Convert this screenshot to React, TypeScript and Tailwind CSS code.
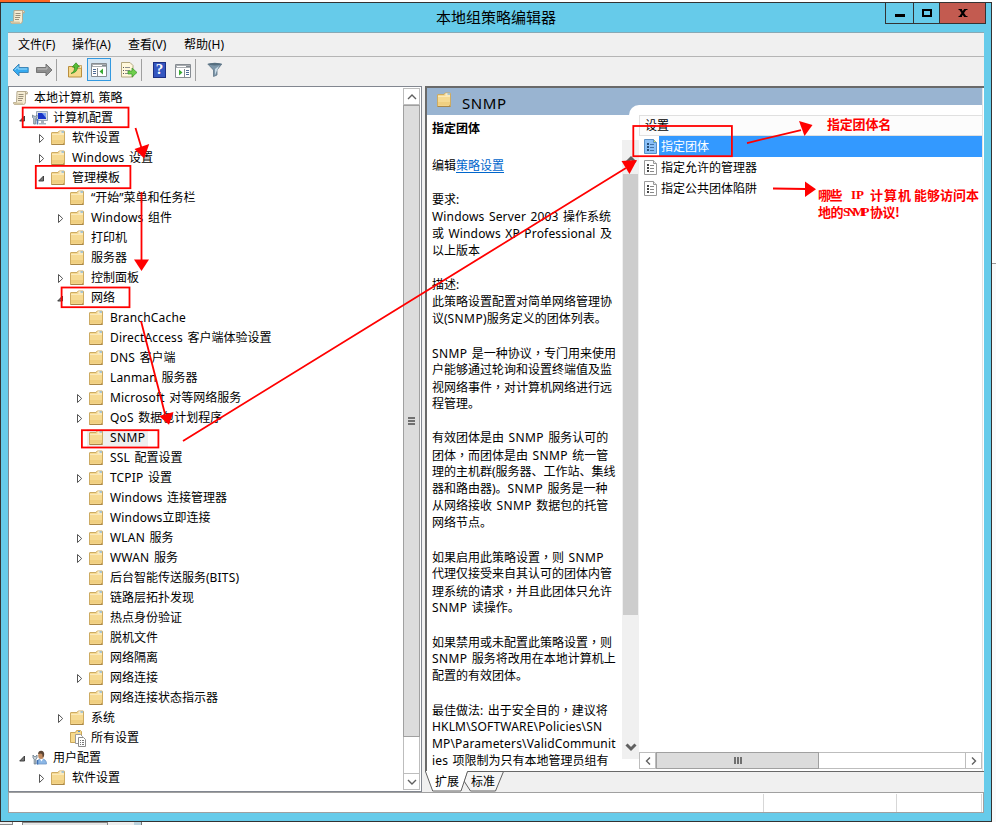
import React from 'react';

type IconKind = 'folder' | 'scroll' | 'computer' | 'user' | 'all';
type Item = { d: number; t: string; k?: IconKind; a?: 'open' | 'closed'; sel?: boolean };

const ITEMS: Item[] = [
  { d: 0, t: '本地计算机 策略', k: 'scroll' },
  { d: 1, t: '计算机配置', k: 'computer', a: 'open' },
  { d: 2, t: '软件设置', a: 'closed' },
  { d: 2, t: 'Windows 设置', a: 'closed' },
  { d: 2, t: '管理模板', a: 'open' },
  { d: 3, t: '“开始”菜单和任务栏' },
  { d: 3, t: 'Windows 组件', a: 'closed' },
  { d: 3, t: '打印机' },
  { d: 3, t: '服务器' },
  { d: 3, t: '控制面板', a: 'closed' },
  { d: 3, t: '网络', a: 'open' },
  { d: 4, t: 'BranchCache' },
  { d: 4, t: 'DirectAccess 客户端体验设置' },
  { d: 4, t: 'DNS 客户端' },
  { d: 4, t: 'Lanman 服务器' },
  { d: 4, t: 'Microsoft 对等网络服务', a: 'closed' },
  { d: 4, t: 'QoS 数据包计划程序', a: 'closed' },
  { d: 4, t: 'SNMP', sel: true },
  { d: 4, t: 'SSL 配置设置' },
  { d: 4, t: 'TCPIP 设置', a: 'closed' },
  { d: 4, t: 'Windows 连接管理器' },
  { d: 4, t: 'Windows立即连接' },
  { d: 4, t: 'WLAN 服务', a: 'closed' },
  { d: 4, t: 'WWAN 服务', a: 'closed' },
  { d: 4, t: '后台智能传送服务(BITS)' },
  { d: 4, t: '链路层拓扑发现' },
  { d: 4, t: '热点身份验证' },
  { d: 4, t: '脱机文件' },
  { d: 4, t: '网络隔离' },
  { d: 4, t: '网络连接', a: 'closed' },
  { d: 4, t: '网络连接状态指示器' },
  { d: 3, t: '系统', a: 'closed' },
  { d: 3, t: '所有设置', k: 'all' },
  { d: 1, t: '用户配置', k: 'user', a: 'open' },
  { d: 2, t: '软件设置', a: 'closed' },
];

const INDENT = ['pl-[4px]', 'pl-[10px]', 'pl-[29px]', 'pl-[48px]', 'pl-[67px]'];

const DESC = [
  '要求:',
  'Windows Server 2003 操作系统',
  '或 Windows XP Professional 及',
  '以上版本',
  '',
  '描述:',
  '此策略设置配置对简单网络管理协',
  '议(SNMP)服务定义的团体列表。',
  '',
  'SNMP 是一种协议，专门用来使用',
  '户能够通过轮询和设置终端值及监',
  '视网络事件，对计算机网络进行远',
  '程管理。',
  '',
  '有效团体是由 SNMP 服务认可的',
  '团体，而团体是由 SNMP 统一管',
  '理的主机群(服务器、工作站、集线',
  '器和路由器)。SNMP 服务是一种',
  '从网络接收 SNMP 数据包的托管',
  '网络节点。',
  '',
  '如果启用此策略设置，则 SNMP',
  '代理仅接受来自其认可的团体内管',
  '理系统的请求，并且此团体只允许',
  'SNMP 读操作。',
  '',
  '如果禁用或未配置此策略设置，则',
  'SNMP 服务将改用在本地计算机上',
  '配置的有效团体。',
  '',
  '最佳做法: 出于安全目的，建议将',
  'HKLM\\SOFTWARE\\Policies\\SN',
  'MP\\Parameters\\ValidCommunit',
  'ies 项限制为只有本地管理员组有',
];

/* Latin runs are set slightly wider; commas use the form centred in its cell. */
function Mixed({ t }: { t: string }) {
  return (
    <>
      {t.split(/([A-Za-z0-9\\]+|，)/).map((p, i) =>
        p === '，' ? (
          <span key={i} lang="zh-TW" className="font-['Noto_Sans_CJK_TC',sans-serif]">{p}</span>
        ) : p === 'SNMP' ? (
          <span key={i} className="tracking-[0.4px]">{p}</span>
        ) : i % 2 ? (
          <span key={i} className="tracking-[0.17px]">{p}</span>
        ) : (
          p
        ),
      )}
    </>
  );
}

function Folder() {
  return (
    <svg width="16" height="16" viewBox="0 0 16 16" className="shrink-0">
      <path d="M.5 3q0-.5.5-.5h6l1.200-1.500H13q.5 0 .5.5v12.500q0 .5-.5.5H1q-.5 0-.5-.5z" fill="#f6da93" stroke="#cdab62" />
      <path d="M1 4h7l1-1h4v2H1z" fill="#fbe9b9" />
      <path d="M1 10h12v3.500H1z" fill="#f0cf80" />
      <path d="M8.500 2H13" stroke="#fff" />
      <path d="M10.500 2H13" stroke="#5da2dc" />
      <path d="M.5 14.500h13" stroke="#a98748" />
      <path d="M12 14l1-1.500V14z" fill="#b08c48" />
    </svg>
  );
}

function Scroll() {
  return (
    <svg width="16" height="16" viewBox="0 0 16 16" className="shrink-0">
      <path d="M4 1.500h9.500q1 0 1 2h-2v8q0 3-2 3H2q-1.500 0-1.500-2h3z" fill="#f5ecd2" stroke="#b5aa90" />
      <path d="M1 12.500h8.500l1 2H2z" fill="#d5c7a3" />
      <path d="M5.500 4.500h5M5.500 6.500h5M5 8.500h5M5 10.500h4" stroke="#9a917c" />
      <path d="M12.500 2v2h2" fill="none" stroke="#bdb095" />
    </svg>
  );
}

function Computer() {
  return (
    <svg width="16" height="16" viewBox="0 0 16 16" className="shrink-0">
      <path d="M4.500 1.500h11v9h-11z" fill="#d7dee4" stroke="#9ba9b5" />
      <path d="M6 3h8v6H6z" fill="#1735c8" />
      <path d="M10 3h4v5z" fill="#7ca2f0" />
      <path d="M9 11h3v2h2v1.500H7V13h2z" fill="#a5b1bc" />
      <path d="M.5 5v2.500l1.200 1V14h2V8.500L5 7.500V5L3.800 6.200H2z" fill="#b6c4cf" stroke="#6c7d8c" strokeWidth=".8" />
      <path d="M5.500 9v5.500" stroke="#5079b5" strokeWidth="1.600" />
    </svg>
  );
}

function User() {
  return (
    <svg width="16" height="16" viewBox="0 0 16 16" className="shrink-0">
      <path d="M5 14q-.5-5 4.500-5t5 5z" fill="#8bb7e6" stroke="#6c94c4" strokeWidth=".8" />
      <path d="M8 9l1.500 2.500L11 9z" fill="#fff" />
      <ellipse cx="9" cy="5.500" rx="2.800" ry="3.600" fill="#c18a5f" />
      <path d="M6 4q.5-3.500 3.500-3.200Q13 1.500 12 6q-1 2-1.500.5Q11 4 9 3.500z" fill="#5d4635" />
      <path d="M1 5v3l1.200 1V14h1.600V9L5 8V5L3.800 6.500H2.200z" fill="#cbd5dd" stroke="#657787" strokeWidth=".8" />
      <path d="M5.500 10v4.500" stroke="#3f70b5" strokeWidth="1.500" />
    </svg>
  );
}

function AllSettings() {
  return (
    <svg width="17" height="17" viewBox="0 0 17 17" className="shrink-0">
      <path d="M.5 2.500h5l1-2h4l1 1v11H.5z" fill="#f6d98c" stroke="#c9a65a" />
      <path d="M8 1.500h2" stroke="#4a90d9" />
      <path d="M5.500 4.500h5l2 2v7h-7z" fill="#fff" stroke="#9b9b9b" />
      <path d="M8.500 7.500h5l2 2v7h-7z" fill="#fff" stroke="#8b8b8b" />
      <path d="M10 10.500h1M12 10.500h2M10 12.500h1M12 12.500h2M10 14.500h1M12 14.500h2" stroke="#777" />
    </svg>
  );
}

function ItemIcon({ k }: { k?: IconKind }) {
  if (k === 'scroll') return <Scroll />;
  if (k === 'computer') return <Computer />;
  if (k === 'user') return <User />;
  if (k === 'all') return <AllSettings />;
  return <Folder />;
}

function Expander({ a }: { a?: 'open' | 'closed' }) {
  return (
    <svg width="12" height="12" viewBox="0 0 12 12" className="shrink-0">
      {a === 'closed' && <path d="M1.500 2.500v8l4.200-4z" fill="#fff" stroke="#555" />}
      {a === 'open' && <path d="M5.500 4v5H.7z" fill="#777" stroke="#333" strokeWidth=".9" />}
    </svg>
  );
}

function TreeRow({ item }: { item: Item }) {
  return (
    <div className={`flex h-[20px] items-center ${INDENT[item.d]}`}>
      {item.d > 0 && (
        <span className="flex w-[13px] shrink-0">
          <Expander a={item.a} />
        </span>
      )}
      <span className={item.sel ? '-ml-[2px] flex h-[19px] items-center bg-[#efefef] pl-[2px]' : 'flex h-[19px] items-center'}>
        <span className="flex w-[18px] shrink-0">
          <ItemIcon k={item.k} />
        </span>
        <span className="whitespace-pre px-[3px] leading-[18px] [word-spacing:1.5px]"><Mixed t={item.t} /></span>
      </span>
    </div>
  );
}

function Chevron({ dir, heavy }: { dir: 'up' | 'down' | 'left' | 'right'; heavy?: boolean }) {
  const paths = {
    up: 'M2 8l4-4 4 4',
    down: 'M2 4l4 4 4-4',
    left: 'M8 2.500L4.500 6 8 9.500',
    right: 'M4 2.500L7.500 6 4 9.500',
  };
  return (
    <svg width="12" height="12" viewBox="0 0 12 12">
      <path d={heavy ? (dir === 'up' ? 'M1.500 8.500L6 4l4.500 4.500' : 'M1.500 3.500L6 8l4.500-4.500') : paths[dir]} fill="none" stroke="#606060" strokeWidth={heavy ? 3 : 1.4} />
    </svg>
  );
}

function Sep() {
  return <span className="h-[22px] w-px shrink-0 bg-[#a0a0a0]" />;
}

function Toolbar() {
  return (
    <div className="flex h-[29px] items-center pb-[4px] pl-[4px]">
      <svg width="18" height="16" viewBox="0 0 18 16" className="shrink-0">
        <path d="M1 8l6-6v3.500h9.200v5H7V14z" fill="#35aaf0" stroke="#3f87b8" />
        <path d="M2.800 8L6 4.500V7h9.200" fill="none" stroke="#a6dcf7" />
      </svg>
      <svg width="18" height="16" viewBox="0 0 18 16" className="ml-[5px] shrink-0">
        <path d="M17 8l-6-6v3.500H1.500v5H11V14z" fill="#8d8d8d" stroke="#757575" />
        <path d="M2.500 7H12V4.500" fill="none" stroke="#bdbdbd" />
      </svg>
      <span className="ml-[3px] flex"><Sep /></span>
      <svg width="16" height="16" viewBox="0 0 16 16" className="ml-[11px] shrink-0">
        <path d="M.5 4.500h4l1 1h8v9.500H.5z" fill="#f6d98c" stroke="#b98e3e" />
        <path d="M9 3.500h4.500v3H9z" fill="#f7e3ac" stroke="#b98e3e" strokeWidth=".7" />
        <path d="M3 11.500q4-2 3.500-6.500H4.200L8 .8 11.500 5H9.500q0 5.500-6.500 6.500z" fill="#58bd35" stroke="#2b8a20" strokeWidth=".7" />
      </svg>
      <span className="ml-[3px] flex h-[23px] w-[24px] shrink-0 items-center justify-center border border-[#3399e0] bg-[#d5e6f3]">
        <svg width="16" height="14" viewBox="0 0 16 14">
          <path d="M.5.5h15v13H.5z" fill="#fff" stroke="#868c92" />
          <path d="M1 1h14v3H1z" fill="#a9adb1" />
          <path d="M2 2.500h9" stroke="#fff" />
          <path d="M11.500 2.500h1M13.500 2.500h1" stroke="#5b6670" />
          <path d="M6.500 5v8" stroke="#868c92" />
          <path d="M2 6.500h3M2 8.500h3M2 10.500h3" stroke="#4e6b96" />
          <path d="M12 5.500v6L8.500 8.500z" fill="#3aaa35" />
        </svg>
      </span>
      <svg width="17" height="16" viewBox="0 0 17 16" className="ml-[10px] shrink-0">
        <path d="M.5.500h8.500l3 3v11.500H.5z" fill="#fff8dc" stroke="#b2a77e" />
        <path d="M4 5.500h5M4 8.500h5M4 11.500h5" stroke="#8f8f8f" />
        <path d="M2 5.500h1M2 8.500h1M2 11.500h1" stroke="#555" />
        <path d="M7 9h4V6l5 4.500-5 4.500v-3H7z" fill="#6fcf4c" stroke="#37932a" strokeWidth=".7" />
      </svg>
      <span className="ml-[3px] flex"><Sep /></span>
      <span className="ml-[11px] flex h-[16px] w-[13px] shrink-0 items-center justify-center border border-[#1c2f83] bg-[#3557c0] font-['Liberation_Serif',serif] text-[15px] font-bold leading-[15px] text-white">?</span>
      <svg width="16" height="14" viewBox="0 0 16 14" className="ml-[9px] mt-[2px] shrink-0">
        <path d="M.5.5h15v13H.5z" fill="#fff" stroke="#868c92" />
        <path d="M1 1h14v3H1z" fill="#a9adb1" />
        <path d="M2 2.500h9" stroke="#fff" />
        <path d="M11.500 2.500h1M13.500 2.500h1" stroke="#5b6670" />
        <path d="M9.500 5v8" stroke="#868c92" />
        <path d="M11 6.500h3M11 8.500h3M11 10.500h3" stroke="#4e6b96" />
        <path d="M4 5.500v6l3.500-3z" fill="#3aaa35" />
      </svg>
      <span className="ml-[4px] flex"><Sep /></span>
      <svg width="16" height="16" viewBox="0 0 16 16" className="ml-[11px] shrink-0">
        <path d="M.8 2h14L10 8v5l-3.500 1.500V8z" fill="#7d97aa" stroke="#5d7485" strokeWidth=".8" />
        <ellipse cx="7.800" cy="2.100" rx="6.500" ry="1.300" fill="#566f80" />
        <path d="M8 13V7L12 4z" fill="#c8dae6" />
      </svg>
    </div>
  );
}

function Tree() {
  return (
    <div className="flex w-[414px] shrink-0 border border-[#828790] bg-white">
      <div className="min-w-0 flex-1 overflow-hidden pt-px">
        {ITEMS.map((it, i) => (
          <TreeRow key={i} item={it} />
        ))}
      </div>
      <div className="mb-px mr-px mt-px flex w-[17px] flex-col">
        <div className="flex h-[17px] items-center justify-center border border-[#bdbdbd]"><Chevron dir="up" /></div>
        <div className="flex h-[632px] flex-col items-center justify-center gap-px border border-[#a0a0a0] bg-[#dcdcdc]">
          <i className="h-[2px] w-[7px] bg-[#707070]" />
          <i className="h-[2px] w-[7px] bg-[#707070]" />
          <i className="h-[2px] w-[7px] bg-[#707070]" />
        </div>
        <div className="flex-1 border-x border-[#bdbdbd]" />
        <div className="flex h-[17px] items-center justify-center border border-[#bdbdbd]"><Chevron dir="down" /></div>
      </div>
    </div>
  );
}

function PolicyIcon({ sel }: { sel?: boolean }) {
  return (
    <svg width="13" height="15" viewBox="0 0 13 15" className="shrink-0">
      <path d="M.5.500h9l3 3v11H.5z" fill={sel ? '#8ac0f7' : '#fff'} stroke={sel ? '#5790c8' : '#999'} />
      <path d="M9.500.500v3h3" fill={sel ? '#d5e66a' : '#eee'} stroke={sel ? '#5790c8' : '#999'} />
      <path d="M3 5h2M3 8h2M3 11h2" stroke={sel ? '#254d78' : '#444'} strokeWidth="2" />
      <path d="M6 5.500h4M6 8.500h4M6 11.500h4" stroke={sel ? '#4173a8' : '#888'} />
    </svg>
  );
}

function PolicyRow({ t, sel }: { t: string; sel?: boolean }) {
  return (
    <div className="flex h-[21px] items-center pl-[5px]">
      <PolicyIcon sel={sel} />
      <span className={sel ? 'ml-[2px] flex h-[21px] flex-1 items-center bg-[#3399ff] pl-[2px] text-white' : 'ml-[4px]'}>{t}</span>
    </div>
  );
}

function Details() {
  return (
    <div className="flex h-[686px] border-b border-l-2 border-t-2 border-[#696969] bg-white">
      <div className="flex min-w-0 flex-1 flex-col">
        <div className="flex h-[27px] items-start bg-[#99b4d1]">
          <div className="flex w-[202px] items-start pl-[10px] pt-[4px]">
            <Folder />
            <span className="ml-[9px] text-[15px] leading-[22px] tracking-[0.6px]">SNMP</span>
          </div>
          <div className="mt-[17px] h-[10px] flex-1 rounded-tl-[10px] bg-white" />
        </div>
        <div className="flex min-h-0 flex-1">
          <div className="w-[195px] shrink-0 overflow-hidden whitespace-pre pl-[5px] pt-[5px] leading-[17px] [word-spacing:1.3px]">
            <div className="font-bold">指定团体</div>
            <div className="mt-[20px]">编辑<span className="text-[#0066cc] underline underline-offset-2">策略设置</span></div>
            <div className="mt-[17px]">
              {DESC.map((l, i) => (
                <div key={i} className="h-[17px]"><Mixed t={l} /></div>
              ))}
            </div>
          </div>
          <div className="mb-[12px] mt-[25px] flex w-[17px] shrink-0 flex-col items-center bg-[#f0f0f0]">
            <div className="flex h-[34px] items-center pt-[6px]"><Chevron dir="up" heavy /></div>
            <div className="h-[441px] w-[15px] bg-[#cdcdcd]" />
            <div className="flex-1" />
            <div className="flex h-[24px] items-center"><Chevron dir="down" heavy /></div>
          </div>
          <div className="flex min-w-0 flex-1 flex-col">
            <div className="h-[21px] border border-r-0 border-[#e0e0e0] bg-[#fcfcfc] pl-[5px] leading-[20px]">设置</div>
            <PolicyRow t="指定团体" sel />
            <PolicyRow t="指定允许的管理器" />
            <PolicyRow t="指定公共团体陷阱" />
            <div className="flex-1" />
            <div className="mb-[2px] flex h-[17px] shrink-0">
              <div className="flex w-[17px] items-center justify-center border border-[#bdbdbd]"><Chevron dir="left" /></div>
              <div className="flex w-[163px] items-center justify-center gap-px border border-[#a0a0a0] bg-[#dcdcdc]">
                <i className="h-[7px] w-[2px] bg-[#707070]" />
                <i className="h-[7px] w-[2px] bg-[#707070]" />
                <i className="h-[7px] w-[2px] bg-[#707070]" />
              </div>
              <div className="flex-1 border-y border-[#bdbdbd]" />
              <div className="flex w-[17px] items-center justify-center border border-[#bdbdbd]"><Chevron dir="right" /></div>
            </div>
          </div>
        </div>
      </div>
      <div className="w-[2px] shrink-0 border-l border-[#e3e3e3] bg-white" />
    </div>
  );
}

function ViewTabs() {
  return (
    <div className="relative flex h-[20px] bg-[#f0f0f0]">
      <svg width="80" height="21" viewBox="0 0 80 21" className="absolute -top-px left-0">
        <path d="M42 .5L39 10l6.500 10H70.500L78.500.5z" fill="#f5f5f5" stroke="#606060" />
        <path d="M0 0l7.500 20h28.500L42.500 0z" fill="#fff" />
        <path d="M.3 0l7.400 20H36L42.500.5" fill="none" stroke="#606060" />
      </svg>
      <span className="relative ml-[10px] leading-[20px]">扩展</span>
      <span className="relative ml-[12px] leading-[20px]">标准</span>
    </div>
  );
}

function Annotations() {
  return (
    <div className="pointer-events-none absolute inset-0 font-['Noto_Sans_CJK_SC',sans-serif] text-[13px] font-bold text-[#ff0000]">
      <svg width="996" height="825" viewBox="0 0 996 825" className="absolute left-0 top-0">
        <g fill="none" stroke="#ff0000" strokeWidth="1.800">
          <rect x="22.700" y="107.600" width="105.800" height="19.600" />
          <rect x="35.800" y="165.900" width="94.600" height="22.300" />
          <rect x="61.600" y="287.500" width="67.900" height="19.700" />
          <rect x="81.900" y="430.200" width="76.500" height="17.300" />
          <rect x="633.300" y="126" width="98.600" height="30.200" />
          <path d="M135.500 128l6 20M141.500 192v70M141 321l24 93M183 441L626 168M747 143l54-13M773 188.500l33 .5" />
        </g>
        <g fill="#ff0000">
          <path d="M134.500 149l14.700-5-5 14.500z" />
          <path d="M134 259.500h15l-7.500 11.500z" />
          <path d="M159 416l14.500-4-4.500 12.700z" />
          <path d="M621.500 161l15.500-1-7.500 14z" />
          <path d="M799 121l13.500 4-8 11z" />
          <path d="M805 181.500v15.500l11-7.700z" />
        </g>
      </svg>
      <span className="absolute left-[827px] top-[115px] whitespace-nowrap leading-[18px] tracking-[-0.2px]">指定团体名</span>
      <span className="absolute left-[818px] top-[187px] flex whitespace-nowrap leading-[16px]">
        <span className="w-[33px] tracking-[-1.500px]">哪些</span>
        <span className="w-[19px] font-['Liberation_Serif',serif]">IP</span>
        <span className="w-[44px] tracking-[1px]">计算机</span>
        <span>能够访问本</span>
      </span>
      <span className="absolute left-[818px] top-[204px] flex whitespace-nowrap leading-[16px]">
        <span className="w-[25px] tracking-[-0.500px]">地的</span>
        <span className="w-[27px] font-['Liberation_Serif',serif] tracking-[-3.500px]">SNMP</span>
        <span className="tracking-[-0.5px]">协议!</span>
      </span>
    </div>
  );
}

export default function App() {
  return (
    <div lang="zh-CN" className="relative flex h-[825px] w-[996px] flex-col overflow-hidden bg-white font-['Noto_Sans','Noto_Sans_CJK_SC',sans-serif] text-[12px] text-black">
      <div className="h-[2px] w-[50px] shrink-0 bg-[#ff6622]" />
      <div className="flex h-[820px] shrink-0">
        <div className="flex w-[992px] flex-col border border-[#333] bg-[#66cbea]">
          <div className="flex h-[29px] items-start">
            <div className="flex w-[884px] items-start pl-[9px] pt-[6px]">
              <Scroll />
              <span className="flex-1 pl-[81px] text-center text-[15px] leading-[16px]">本地组策略编辑器</span>
            </div>
            <div className="flex h-[21px] w-[101px] border border-t-0 border-[#333]">
              <div className="flex w-[28px] items-center justify-center border-r border-[#333] pt-[4px]"><i className="h-[3px] w-[10px] bg-black" /></div>
              <div className="flex w-[26px] items-center justify-center border-r border-[#333]"><i className="h-[8px] w-[10px] border-2 border-black" /></div>
              <div className="flex flex-1 items-center justify-center bg-[#c35b50]">
                <svg width="10" height="8" viewBox="0 0 10 8"><path d="M2 0l5.500 8M7.500 0L2 8" stroke="#000" strokeWidth="2.200" /><path d="M.5.5h3.500M6 .5h3.500M.5 7.500h3.500M6 7.500h3.500" stroke="#000" /></svg>
              </div>
            </div>
          </div>
          <div className="mx-[7px] flex h-[781px] flex-col border-t border-[#88a9b5] bg-[#f0f0f0]">
            <div className="flex h-[24px] items-center gap-[16px] border-b border-[#b5b5b5] pl-[10px]">
              <span className="w-[38px] whitespace-nowrap">文件(F)</span>
              <span className="w-[40px] whitespace-nowrap">操作(A)</span>
              <span className="w-[40px] whitespace-nowrap">查看(V)</span>
              <span className="whitespace-nowrap">帮助(H)</span>
            </div>
            <Toolbar />
            <div className="flex h-[706px] shrink-0">
              <Tree />
              <div className="ml-[3px] flex min-w-0 flex-1 flex-col">
                <Details />
                <ViewTabs />
              </div>
            </div>
            <div className="flex h-[21px] shrink-0 border border-[#a0a0a0] bg-white pt-px">
              <div className="w-[755px] border-r border-[#d7d7d7]" />
              <div className="w-[133px] border-r border-[#d7d7d7]" />
              <div className="w-[85px] border-r border-[#d7d7d7]" />
            </div>
          </div>
        </div>
        <div className="mt-[261px] flex-1 border-t border-[#999] bg-[#fafafa]" />
      </div>
      <div className="flex h-[3px] shrink-0">
        <div className="w-[13px] border-b border-r border-[#888] bg-[#eee]" />
        <div className="ml-[9px] w-[86px] border border-b-0 border-[#888] bg-[#e6e6e6]" />
        <div className="w-[26px] bg-[#eee]" />
        <div className="w-[8px] border-r border-[#777] bg-[#bcd3de]" />
      </div>
      <Annotations />
    </div>
  );
}
